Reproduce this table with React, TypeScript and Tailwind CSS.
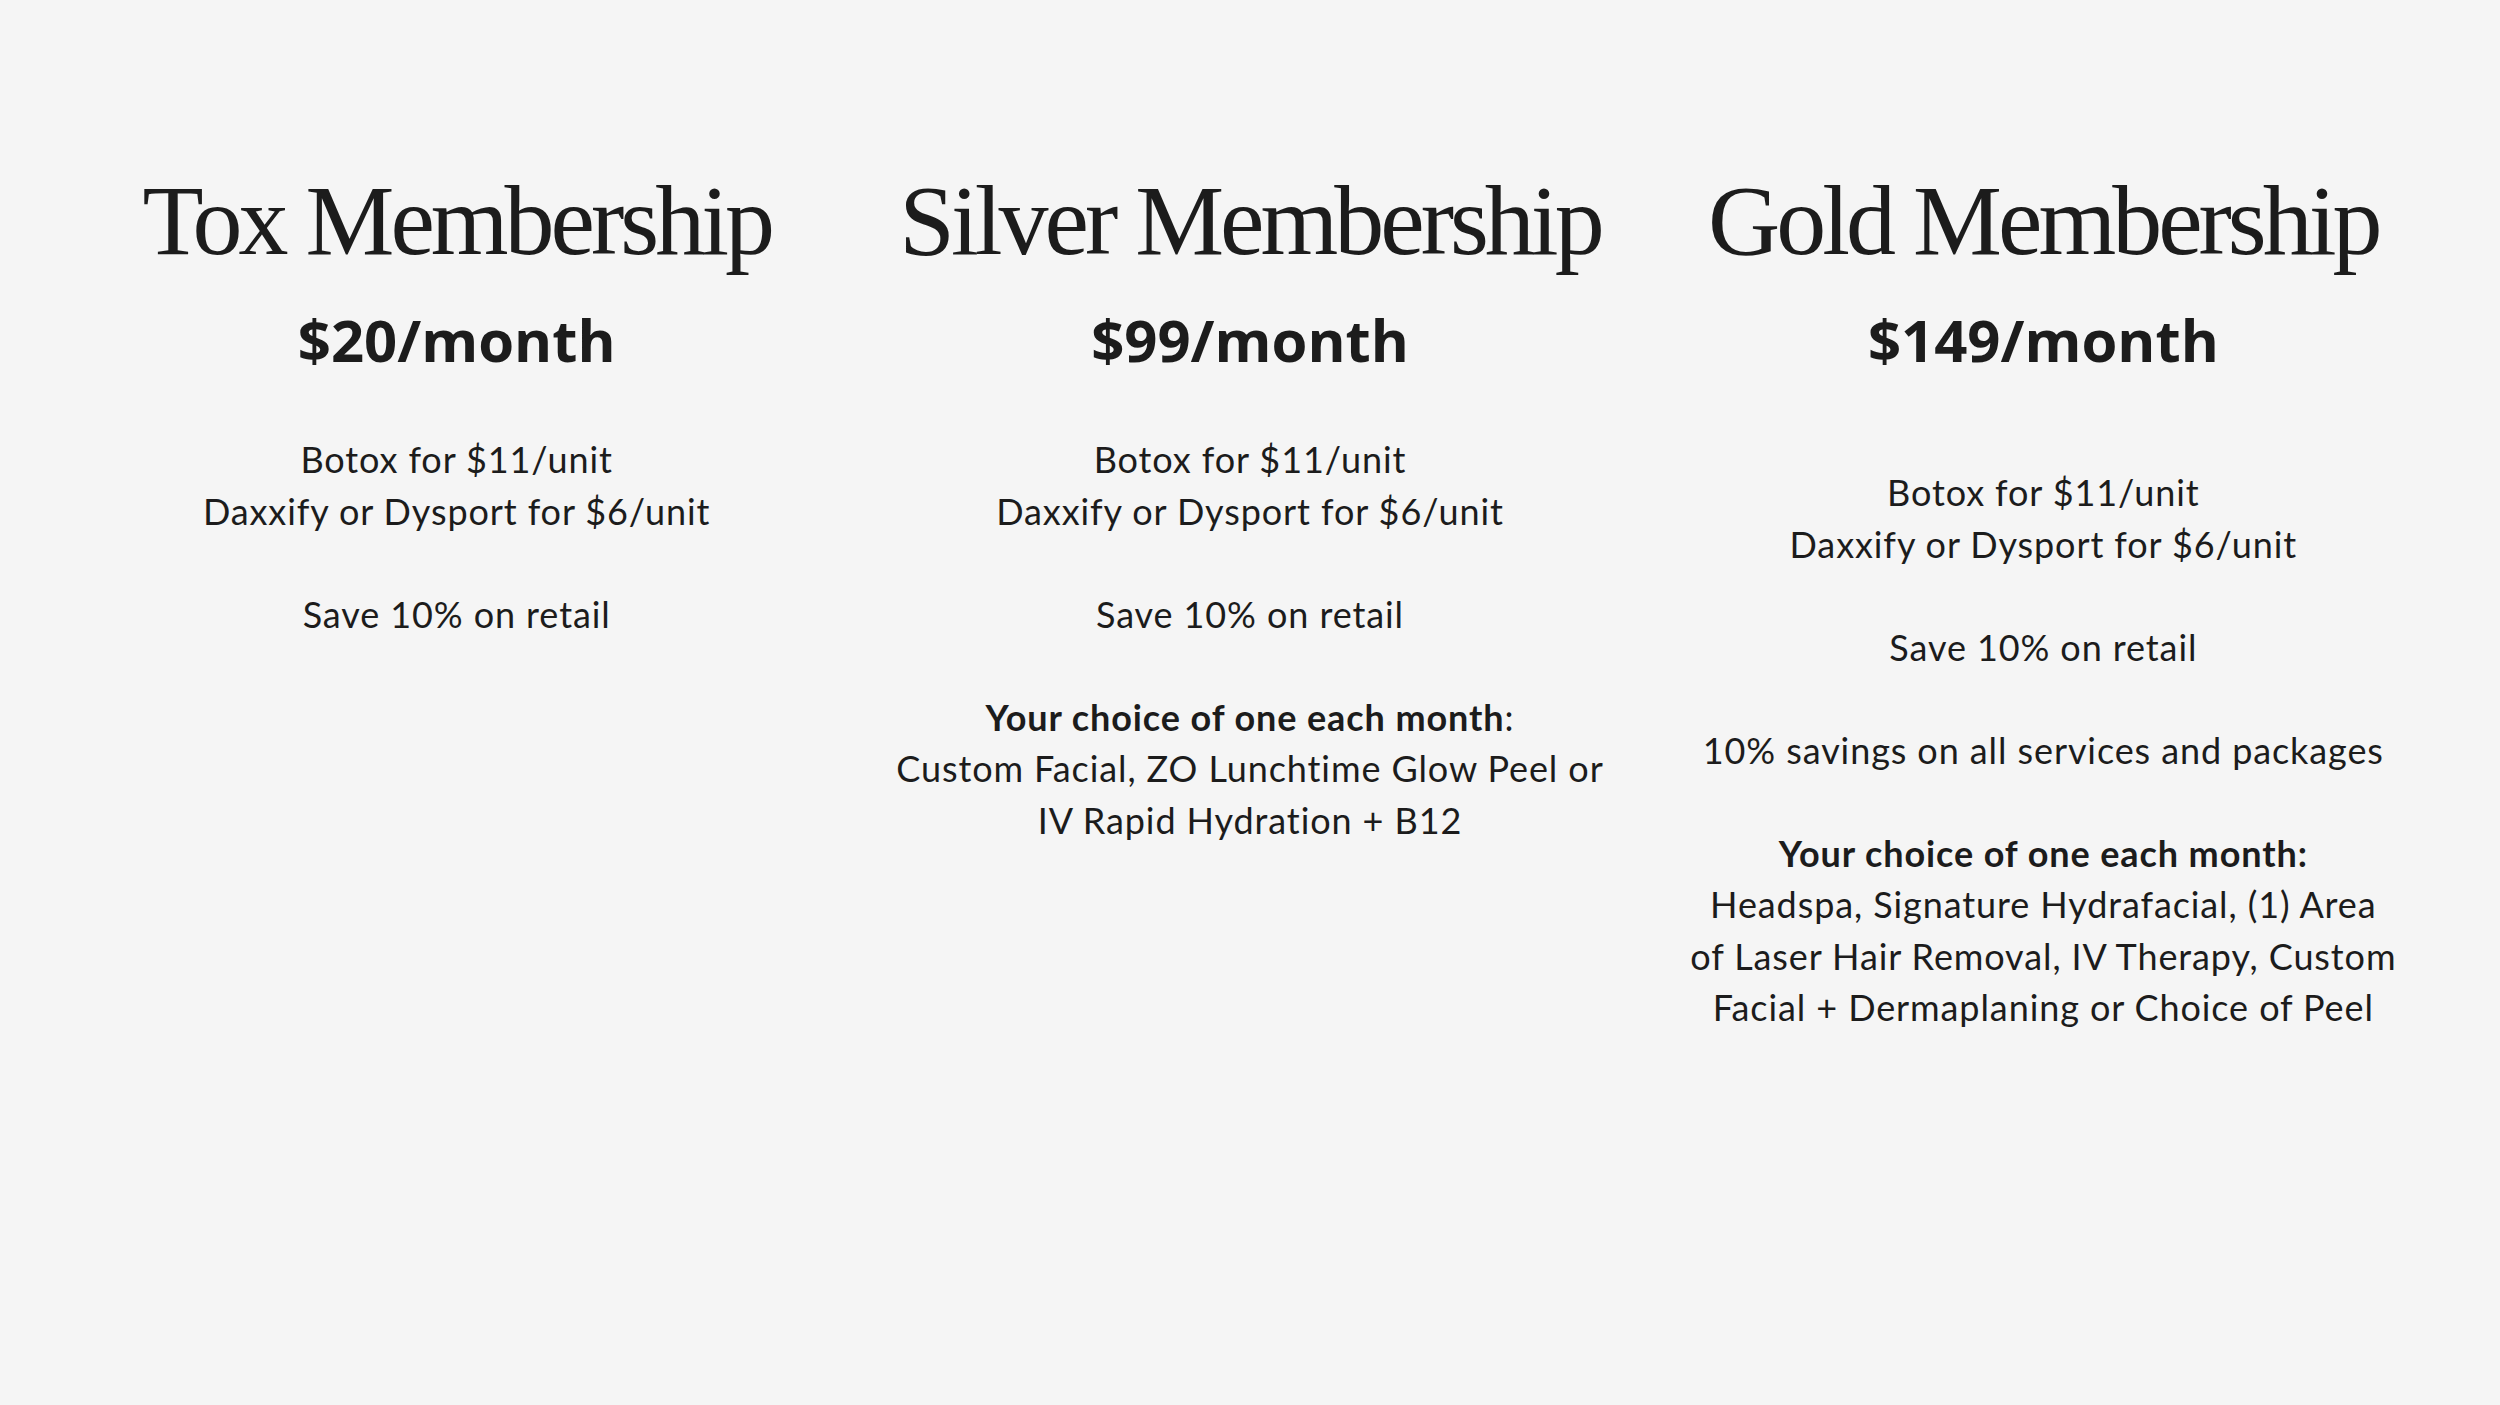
import React from "react";

const serif = { fontFamily: '"Liberation Serif", "Times New Roman", serif' };

function Heading({ children }: { children: React.ReactNode }) {
  return (
    <h2
      className="whitespace-nowrap text-center text-[100px] leading-[100px] tracking-[-0.04em] text-[#1c1c1c] font-normal"
      style={serif}
    >
      {children}
    </h2>
  );
}

function Price({ children }: { children: React.ReactNode }) {
  return (
    <div className="mt-[40px] whitespace-nowrap text-center font-['Open_Sans',sans-serif] text-[58px] font-bold leading-[58px] text-[#1c1c1c]">
      {children}
    </div>
  );
}

function Body({ children, extra }: { children: React.ReactNode; extra?: boolean }) {
  return (
    <div
      className={
        extra
          ? "mt-[98px] whitespace-nowrap text-center font-['Lato',sans-serif] text-[36px] leading-[51.5px] tracking-[0.025em] text-[#1c1c1c]"
          : "mt-[65px] whitespace-nowrap text-center font-['Lato',sans-serif] text-[36px] leading-[51.5px] tracking-[0.025em] text-[#1c1c1c]"
      }
    >
      {children}
    </div>
  );
}

export default function App() {
  return (
    <div className="min-h-[1405px] w-full bg-[#f5f5f5]">
      <div className="grid grid-cols-3 px-[60px] pt-[171px]">
        <div className="flex flex-col items-center">
          <Heading>Tox Membership</Heading>
          <Price>$20/month</Price>
          <Body>
            <p>Botox for $11/unit</p>
            <p>Daxxify or Dysport for $6/unit</p>
            <p>&nbsp;</p>
            <p>Save 10% on retail</p>
          </Body>
        </div>
        <div className="flex flex-col items-center">
          <Heading>Silver Membership</Heading>
          <Price>$99/month</Price>
          <Body>
            <p>Botox for $11/unit</p>
            <p>Daxxify or Dysport for $6/unit</p>
            <p>&nbsp;</p>
            <p>Save 10% on retail</p>
            <p>&nbsp;</p>
            <p>
              <span className="font-bold">Your choice of one each month</span>:
            </p>
            <p>Custom Facial, ZO Lunchtime Glow Peel or</p>
            <p>IV Rapid Hydration + B12</p>
          </Body>
        </div>
        <div className="flex flex-col items-center">
          <Heading>Gold Membership</Heading>
          <Price>$149/month</Price>
          <Body extra>
            <p>Botox for $11/unit</p>
            <p>Daxxify or Dysport for $6/unit</p>
            <p>&nbsp;</p>
            <p>Save 10% on retail</p>
            <p>&nbsp;</p>
            <p>10% savings on all services and packages</p>
            <p>&nbsp;</p>
            <p className="font-bold">Your choice of one each month:</p>
            <p>Headspa, Signature Hydrafacial, (1) Area</p>
            <p>of Laser Hair Removal, IV Therapy, Custom</p>
            <p>Facial + Dermaplaning or Choice of Peel</p>
          </Body>
        </div>
      </div>
    </div>
  );
}
